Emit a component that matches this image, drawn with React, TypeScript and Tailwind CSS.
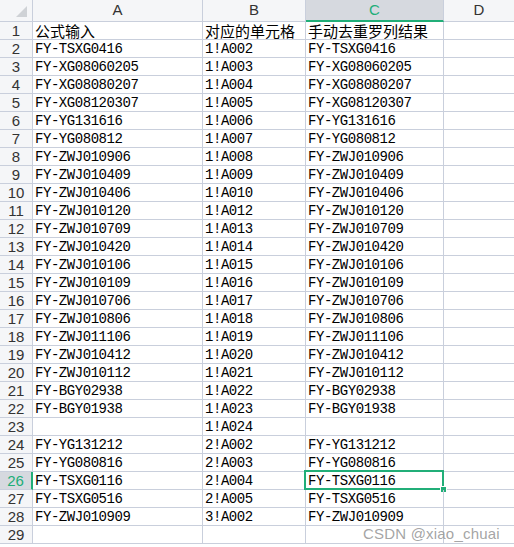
import React from "react";

const rows: [string, string, string][] = [
  ["公式输入", "对应的单元格", "手动去重罗列结果"],
  ["FY-TSXG0416", "1!A002", "FY-TSXG0416"],
  ["FY-XG08060205", "1!A003", "FY-XG08060205"],
  ["FY-XG08080207", "1!A004", "FY-XG08080207"],
  ["FY-XG08120307", "1!A005", "FY-XG08120307"],
  ["FY-YG131616", "1!A006", "FY-YG131616"],
  ["FY-YG080812", "1!A007", "FY-YG080812"],
  ["FY-ZWJ010906", "1!A008", "FY-ZWJ010906"],
  ["FY-ZWJ010409", "1!A009", "FY-ZWJ010409"],
  ["FY-ZWJ010406", "1!A010", "FY-ZWJ010406"],
  ["FY-ZWJ010120", "1!A012", "FY-ZWJ010120"],
  ["FY-ZWJ010709", "1!A013", "FY-ZWJ010709"],
  ["FY-ZWJ010420", "1!A014", "FY-ZWJ010420"],
  ["FY-ZWJ010106", "1!A015", "FY-ZWJ010106"],
  ["FY-ZWJ010109", "1!A016", "FY-ZWJ010109"],
  ["FY-ZWJ010706", "1!A017", "FY-ZWJ010706"],
  ["FY-ZWJ010806", "1!A018", "FY-ZWJ010806"],
  ["FY-ZWJ011106", "1!A019", "FY-ZWJ011106"],
  ["FY-ZWJ010412", "1!A020", "FY-ZWJ010412"],
  ["FY-ZWJ010112", "1!A021", "FY-ZWJ010112"],
  ["FY-BGY02938", "1!A022", "FY-BGY02938"],
  ["FY-BGY01938", "1!A023", "FY-BGY01938"],
  ["", "1!A024", ""],
  ["FY-YG131212", "2!A002", "FY-YG131212"],
  ["FY-YG080816", "2!A003", "FY-YG080816"],
  ["FY-TSXG0116", "2!A004", "FY-TSXG0116"],
  ["FY-TSXG0516", "2!A005", "FY-TSXG0516"],
  ["FY-ZWJ010909", "3!A002", "FY-ZWJ010909"],
  ["", "", ""],
];

const mono = "font-['Liberation_Mono',monospace] text-[14px] tracking-[-0.45px]";
const cjk = "font-['Noto_Sans_CJK_SC',sans-serif] text-[15px]";

export default function App() {
  return (
    <div className="relative w-[514px] h-[547px] overflow-hidden bg-white">
      <div className="grid grid-cols-[33px_170px_103px_138px_71px] grid-rows-[22px] auto-rows-[18px] text-black">
        {/* header row */}
        <div className="relative bg-[#f5f6f8] border-r border-b border-[#c9cfdc]">
          <div className="absolute right-[5px] bottom-[4px] w-0 h-0 border-l-[11px] border-l-transparent border-b-[11px] border-b-[#cfd2d6]" />
        </div>
        {["A", "B", "C", "D"].map((c) => (
          <div
            key={c}
            className={
              c === "C"
                ? "flex items-center justify-center bg-[#d6d9df] border-r border-[#c9cfdc] border-b-2 border-b-[#21ae78] text-[#21ae78] font-['Liberation_Sans',sans-serif] text-[15px]"
                : "flex items-center justify-center bg-[#f5f6f8] border-r border-b border-[#c9cfdc] text-[#333] font-['Liberation_Sans',sans-serif] text-[15px]"
            }
          >
            {c}
          </div>
        ))}
        {rows.map((r, i) => {
          const n = i + 1;
          const sel = n === 26;
          return (
            <React.Fragment key={n}>
              <div
                className={
                  sel
                    ? "flex items-end justify-center pb-[1px] leading-none bg-[#d6d9df] border-b border-[#c9cfdc] border-r-2 border-r-[#21ae78] text-[#21ae78] font-['Liberation_Sans',sans-serif] text-[15px]"
                    : "flex items-end justify-center pb-[1px] leading-none bg-[#f5f6f8] border-r border-b border-[#c9cfdc] text-[#333] font-['Liberation_Sans',sans-serif] text-[15px]"
                }
              >
                {n}
              </div>
              {r.map((v, j) => (
                <div
                  key={j}
                  className={`relative flex items-end pl-[2px] pb-[1px] leading-none whitespace-nowrap border-r border-b border-[#c9cfdc] ${n === 1 ? cjk : mono}`}
                >
                  {v}
                  {sel && j === 2 && (
                    <div className="absolute left-[-2px] top-[-2px] w-[140px] h-[20px] border-2 border-[#21ae78]">
                      <div className="absolute right-[-4px] bottom-[-4px] w-[5px] h-[5px] bg-[#21ae78] outline outline-1 outline-white" />
                    </div>
                  )}
                </div>
              ))}
              <div className="border-b border-[#c9cfdc]" />
            </React.Fragment>
          );
        })}
      </div>
      <div className="absolute left-[363px] top-[523px] text-[15px] text-[#9a9a9a]/90 font-['Liberation_Sans',sans-serif] tracking-[0.2px]">
        CSDN @xiao_chuai
      </div>
    </div>
  );
}
